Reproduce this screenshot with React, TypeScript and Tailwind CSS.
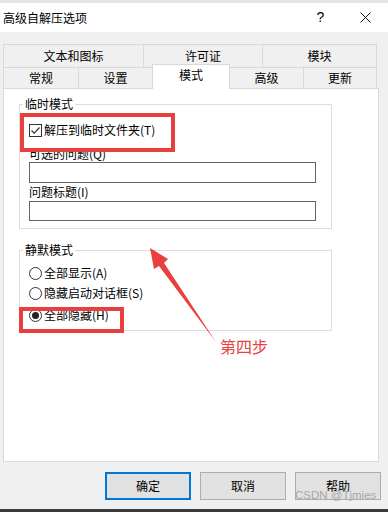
export default function App() {
  const row1 = [
    { t: "文本和图标", w: "w-[140px]" },
    { t: "许可证", w: "w-[119px]" },
    { t: "模块", w: "w-[115px] border-r" },
  ];
  return (
    <div className="relative w-[388px] h-[512px] flex flex-col bg-[#f0f0f0] overflow-hidden text-[12px] text-black font-['Noto_Sans_CJK_SC','Noto_Sans',sans-serif]">
      <div className="h-[3px] bg-[#e4e4e4]" />
      <div className="h-[29px] bg-white flex items-center">
        <span className="pl-[3px] leading-[16px]">高级自解压选项</span>
        <div className="ml-auto flex h-full">
          <div className="w-[45px] flex items-center justify-center text-[14px] font-['Liberation_Sans',sans-serif]">?</div>
          <div className="w-[45px] flex items-center justify-center">
            <svg width="11" height="11" viewBox="0 0 11 11">
              <path d="M0.5 0.5L10.5 10.5M10.5 0.5L0.5 10.5" stroke="#111" strokeWidth="1" />
            </svg>
          </div>
        </div>
      </div>

      <div className="mt-[12px] ml-[3px] w-[374px]">
        <div className="flex h-[23px]">
          {row1.map((r) => (
            <div key={r.t} className={`${r.w} border-t border-l border-[#d9d9d9] flex items-center justify-center leading-[16px]`}>
              {r.t}
            </div>
          ))}
        </div>
        <div className="flex h-[21px] items-start">
          <div className="w-[75px] h-[21px] border-t border-l border-[#d9d9d9] flex items-center justify-center leading-[16px]">常规</div>
          <div className="w-[74px] h-[21px] border-t border-l border-[#d9d9d9] flex items-center justify-center leading-[16px]">设置</div>
          <div className="relative z-10 w-[78px] h-[25px] -mt-[3px] bg-white border-t border-l border-r border-[#d9d9d9] flex justify-center pt-[2px] leading-[16px]">模式</div>
          <div className="w-[73px] h-[21px] border-t border-[#d9d9d9] flex items-center justify-center leading-[16px]">高级</div>
          <div className="w-[74px] h-[21px] border-t border-l border-r border-[#d9d9d9] flex items-center justify-center leading-[16px]">更新</div>
        </div>
      </div>

      <div className="relative ml-[3px] w-[376px] h-[374px] bg-white border border-[#d9d9d9]">
        <fieldset className="ml-[15px] mt-[7px] w-[313px] border border-[#dcdcdc]">
          <legend className="ml-[3px] px-[2px] leading-[16px]">临时模式</legend>
          <div className="pl-[9px] pb-[7px]">
            <div className="mt-[10px] h-[16px] flex items-center gap-[2px]">
              <div className="w-[13px] h-[13px] border border-[#333] flex items-center justify-center">
                <svg width="11" height="11" viewBox="0 0 11 11">
                  <path d="M1.5 5.5L4.2 8.2L9.5 2.5" fill="none" stroke="#333" strokeWidth="1.2" />
                </svg>
              </div>
              <span className="leading-[16px]">解压到临时文件夹(T)</span>
            </div>
            <div className="mt-[9px] h-[14px] leading-[14px]">可选的问题(Q)</div>
            <div className="mt-[1px] w-[287px] h-[21px] border border-[#646464] bg-white" />
            <div className="mt-[2px] h-[14px] leading-[14px]">问题标题(I)</div>
            <div className="mt-[2px] w-[287px] h-[20px] border border-[#646464] bg-white" />
          </div>
        </fieldset>

        <fieldset className="ml-[15px] mt-[13px] w-[313px] border border-[#dcdcdc]">
          <legend className="ml-[3px] px-[2px] leading-[16px]">静默模式</legend>
          <div className="pl-[9px] pb-[7px]">
            <div className="mt-[7px] h-[16px] flex items-center gap-[2px]">
              <div className="w-[13px] h-[13px] rounded-full border border-[#333]" />
              <span className="leading-[16px]">全部显示(A)</span>
            </div>
            <div className="mt-[4px] h-[16px] flex items-center gap-[2px]">
              <div className="w-[13px] h-[13px] rounded-full border border-[#333]" />
              <span className="leading-[16px]">隐藏启动对话框(S)</span>
            </div>
            <div className="mt-[6px] h-[16px] flex items-center gap-[2px]">
              <div className="w-[13px] h-[13px] rounded-full border border-[#333] flex items-center justify-center">
                <div className="w-[7px] h-[7px] rounded-full bg-[#222]" />
              </div>
              <span className="leading-[16px]">全部隐藏(H)</span>
            </div>
          </div>
        </fieldset>

        <div className="absolute left-[16px] top-[24px] w-[155px] h-[39px] border-[4px] border-[#e8403f]" />
        <div className="absolute left-[15px] top-[218px] w-[105px] h-[26px] border-[4px] border-[#e8403f]" />
      </div>

      <div className="mt-[10px] flex justify-end gap-[9px] pr-[7px]">
        <div className="w-[86px] h-[28px] border-2 border-[#0078d7] bg-[#e1e1e1] flex items-center justify-center leading-[16px]">确定</div>
        <div className="w-[86px] h-[28px] border border-[#adadad] bg-[#e1e1e1] flex items-center justify-center leading-[16px]">取消</div>
        <div className="w-[86px] h-[28px] border border-[#adadad] bg-[#e1e1e1] flex items-center justify-center leading-[16px]">帮助</div>
      </div>

      <div className="mt-auto h-[3px] bg-[#3a3a3a]" />

      <svg className="absolute left-0 top-0 pointer-events-none" width="388" height="512" viewBox="0 0 388 512">
        <polygon points="150,248 168,259 164,263 216,342 159,266 154,269" fill="#e8403f" />
      </svg>
      <div className="absolute left-[220px] top-[336px] text-[16px] leading-[20px] text-[#e8403f]">第四步</div>
      <div className="absolute left-[295px] top-[488px] text-[11.5px] leading-[14px] text-[#a8a8a8] font-['Liberation_Sans',sans-serif]">CSDN @Tjmies</div>
    </div>
  );
}
